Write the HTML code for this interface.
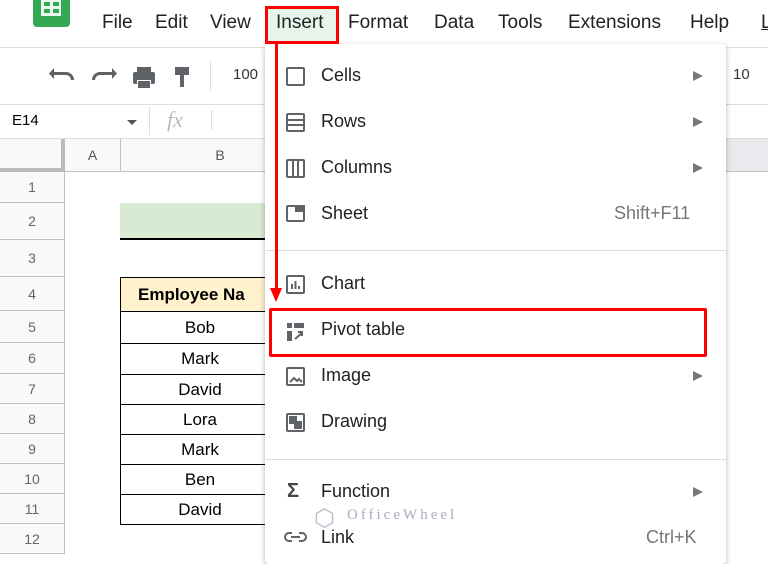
<!DOCTYPE html><html><head><style>
body{margin:0;width:768px;height:554px;overflow:hidden;position:relative;background:#fff;font-family:"Liberation Sans",Arial,sans-serif;}
.a{position:absolute;white-space:nowrap}
.rh{position:absolute;left:0;width:65px;background:#f8f9fa;border-bottom:1px solid #c0c0c0;border-right:1px solid #c0c0c0;box-sizing:border-box;text-align:center;color:#666;font-size:14px}
.cell{position:absolute;left:120px;width:160px;border:1px solid #000;box-sizing:border-box;text-align:center;font-size:17px;color:#000;white-space:nowrap;overflow:hidden}
.mi{position:absolute;left:321px;font-size:18px;color:#202124;white-space:nowrap}
.arr{position:absolute;left:693px;width:0;height:0;border-left:10px solid #777;border-top:5px solid transparent;border-bottom:5px solid transparent}
</style></head><body>
<div class="a" style="left:33px;top:0;width:37px;height:27px;background:#34a853;border-radius:0 0 4px 4px"></div>
<div class="a" style="left:41px;top:0;width:20px;height:16px;background:#fff;opacity:.9"></div>
<div class="a" style="left:44px;top:2px;width:6px;height:4px;background:#34a853"></div><div class="a" style="left:53px;top:2px;width:6px;height:4px;background:#34a853"></div>
<div class="a" style="left:44px;top:9px;width:6px;height:4px;background:#34a853"></div><div class="a" style="left:53px;top:9px;width:6px;height:4px;background:#34a853"></div>
<div class="a" style="top:12px;left:102px;font-size:19px;color:#202124">
<span class="a" style="left:0">File</span><span class="a" style="left:53px">Edit</span><span class="a" style="left:108px">View</span><span class="a" style="left:172px">Insert</span><span class="a" style="left:246px">Format</span><span class="a" style="left:332px">Data</span><span class="a" style="left:396px">Tools</span><span class="a" style="left:466px">Extensions</span><span class="a" style="left:588px">Help</span><span class="a" style="left:659px;text-decoration:underline">L</span></div>
<div class="a" style="left:265px;top:6px;width:68px;height:32px;background:#e6f4ea;border:3px solid #f00;z-index:3"></div>
<div class="a" style="left:276px;top:12px;font-size:19px;color:#202124;z-index:4">Insert</div>
<div class="a" style="left:0;top:47px;width:768px;height:56px;background:#fff;border-top:1px solid #ddd;border-bottom:1px solid #ddd"></div>
<svg class="a" style="left:48px;top:62px" width="170" height="28" viewBox="0 0 170 28" fill="#5f6368">
<path d="M6 10h12a8 8 0 0 1 8 8h-3a5 5 0 0 0-5-5H6v4l-5-5.5 5-5.5z"/>
<path d="M64 10H52a8 8 0 0 0-8 8h3a5 5 0 0 1 5-5h12v4l5-5.5-5-5.5z"/>
<rect x="85" y="10" width="22" height="12" rx="2"/><rect x="89" y="5" width="14" height="5"/><rect x="89" y="18" width="14" height="6" fill="#fff"/><rect x="90" y="19" width="12" height="7"/>
<rect x="127" y="5" width="14" height="8"/><rect x="132" y="13" width="4" height="12"/>
</svg>
<div class="a" style="left:210px;top:62px;width:1px;height:28px;background:#ddd"></div>
<div class="a" style="left:233px;top:66px;font-size:15px;color:#333">100</div>
<div class="a" style="left:733px;top:66px;font-size:15px;color:#333">10</div>
<div class="a" style="left:0;top:103px;width:768px;height:36px;border-bottom:1px solid #ddd;box-sizing:border-box"></div>
<div class="a" style="left:12px;top:112px;font-size:15px;color:#000">E14</div>
<div class="a" style="left:127px;top:120px;border-top:5px solid #555;border-left:5px solid transparent;border-right:5px solid transparent"></div>
<div class="a" style="left:149px;top:107px;width:1px;height:28px;background:#ddd"></div>
<div class="a" style="left:167px;top:107px;font-size:22px;color:#bbb;font-style:italic;font-family:'Liberation Serif',serif">fx</div>
<div class="a" style="left:211px;top:110px;width:1px;height:20px;background:#ddd"></div>
<div class="a" style="left:0;top:139px;width:768px;height:33px;background:#f8f9fa;border-bottom:1px solid #c0c0c0;box-sizing:border-box"></div>
<div class="a" style="left:0;top:139px;width:65px;height:33px;border-right:4px solid #bbb;border-bottom:4px solid #bbb;box-sizing:border-box"></div>
<div class="a" style="left:65px;top:139px;width:55px;height:33px;border-right:1px solid #c0c0c0;text-align:center;line-height:33px;font-size:14px;color:#555">A</div>
<div class="a" style="left:120px;top:139px;width:200px;height:33px;line-height:33px;text-align:center;font-size:14px;color:#555">B</div>
<div class="a" style="left:726px;top:139px;width:42px;height:33px;background:#e8eaed;border-bottom:1px solid #c0c0c0;box-sizing:border-box"></div>
<div class="rh" style="top:172px;height:31px;line-height:31px">1</div>
<div class="rh" style="top:203px;height:37px;line-height:37px">2</div>
<div class="rh" style="top:240px;height:37px;line-height:37px">3</div>
<div class="rh" style="top:277px;height:34px;line-height:34px">4</div>
<div class="rh" style="top:311px;height:32px;line-height:32px">5</div>
<div class="rh" style="top:343px;height:31px;line-height:31px">6</div>
<div class="rh" style="top:374px;height:30px;line-height:30px">7</div>
<div class="rh" style="top:404px;height:30px;line-height:30px">8</div>
<div class="rh" style="top:434px;height:30px;line-height:30px">9</div>
<div class="rh" style="top:464px;height:30px;line-height:30px">10</div>
<div class="rh" style="top:494px;height:30px;line-height:30px">11</div>
<div class="rh" style="top:524px;height:30px;line-height:30px">12</div>
<div class="a" style="left:120px;top:203px;width:160px;height:37px;background:#d9ead3;border-bottom:2px solid #000;box-sizing:border-box"></div>
<div class="cell" style="top:277px;height:35px;line-height:33px;background:#fff2cc;font-weight:bold;text-align:left;padding-left:17px">Employee Na</div>
<div class="cell" style="top:311px;height:33px;line-height:31px">Bob</div>
<div class="cell" style="top:343px;height:32px;line-height:30px">Mark</div>
<div class="cell" style="top:374px;height:31px;line-height:29px">David</div>
<div class="cell" style="top:404px;height:31px;line-height:29px">Lora</div>
<div class="cell" style="top:434px;height:31px;line-height:29px">Mark</div>
<div class="cell" style="top:464px;height:31px;line-height:29px">Ben</div>
<div class="cell" style="top:494px;height:31px;line-height:29px">David</div>
<div class="a" style="left:265px;top:44px;width:461px;height:520px;background:#fff;border-radius:4px;box-shadow:0 2px 6px rgba(0,0,0,.3);z-index:2"></div>
<div style="position:absolute;left:0;top:0;z-index:5">
<svg class="a" style="left:284px;top:64px" width="24" height="490" viewBox="0 0 24 490" fill="none" stroke="#5f6368" stroke-width="2">
<rect x="3" y="4" width="17" height="17" rx="1"/>
<rect x="3" y="50" width="17" height="17" rx="1"/><path d="M3 56h17M3 61h17"/>
<rect x="3" y="96" width="17" height="17" rx="1"/><path d="M9 96v17M14 96v17"/>
<rect x="3" y="142" width="17" height="15" rx="1"/><rect x="12" y="142" width="8" height="5" fill="#5f6368"/>
<rect x="3" y="212" width="17" height="17" rx="1"/><path d="M8 225v-5M11.5 225v-8M15 225v-3"/>
<rect x="3" y="259" width="5" height="5" fill="#5f6368" stroke="none"/><rect x="10" y="259" width="10" height="5" fill="#5f6368" stroke="none"/><rect x="3" y="267" width="5" height="10" fill="#5f6368" stroke="none"/><path d="M11 275l7-6M14 268h4v4"/>
<rect x="3" y="304" width="17" height="17" rx="1"/><path d="M6 318l4-4 3 3 2-2 3 3" />
<rect x="3" y="350" width="17" height="17" rx="1"/><rect x="6" y="353" width="6" height="6" fill="#5f6368"/><rect x="11" y="358" width="6" height="6" fill="#5f6368"/>
<path d="M8 469H5a4 4 0 0 0 0 8h3M15 469h3a4 4 0 0 1 0 8h-3M7 473h9"/>
</svg>
<div class="a" style="left:287px;top:480px;font-size:20px;color:#444;font-weight:bold">Σ</div>
<div class="mi" style="top:65px">Cells</div>
<div class="mi" style="top:111px">Rows</div>
<div class="mi" style="top:157px">Columns</div>
<div class="mi" style="top:203px">Sheet</div>
<div class="mi" style="top:273px">Chart</div>
<div class="mi" style="top:319px">Pivot table</div>
<div class="mi" style="top:365px">Image</div>
<div class="mi" style="top:411px">Drawing</div>
<div class="mi" style="top:481px">Function</div>
<div class="mi" style="top:527px">Link</div>
<div class="a" style="left:614px;top:203px;font-size:18px;color:#777">Shift+F11</div>
<div class="a" style="left:646px;top:527px;font-size:18px;color:#777">Ctrl+K</div>
<div class="arr" style="top:71px"></div><div class="arr" style="top:117px"></div><div class="arr" style="top:163px"></div><div class="arr" style="top:371px"></div><div class="arr" style="top:487px"></div>
<div class="a" style="left:266px;top:250px;width:460px;height:1px;background:#ddd"></div>
<div class="a" style="left:266px;top:459px;width:460px;height:1px;background:#ddd"></div>
<div class="a" style="left:269px;top:308px;width:432px;height:43px;border:3px solid #f00;border-radius:2px"></div>
<div class="a" style="left:275px;top:42px;width:3px;height:250px;background:#f00"></div>
<div class="a" style="left:270px;top:288px;border-top:14px solid #f00;border-left:6px solid transparent;border-right:6px solid transparent"></div>
<div class="a" style="left:314px;top:504px;font-size:24px;color:#bbc">⬡</div>
<div class="a" style="left:347px;top:507px;font-size:15px;color:#aab;letter-spacing:3px;font-family:'Liberation Serif',serif">OfficeWheel</div>
</div>
</body></html>
